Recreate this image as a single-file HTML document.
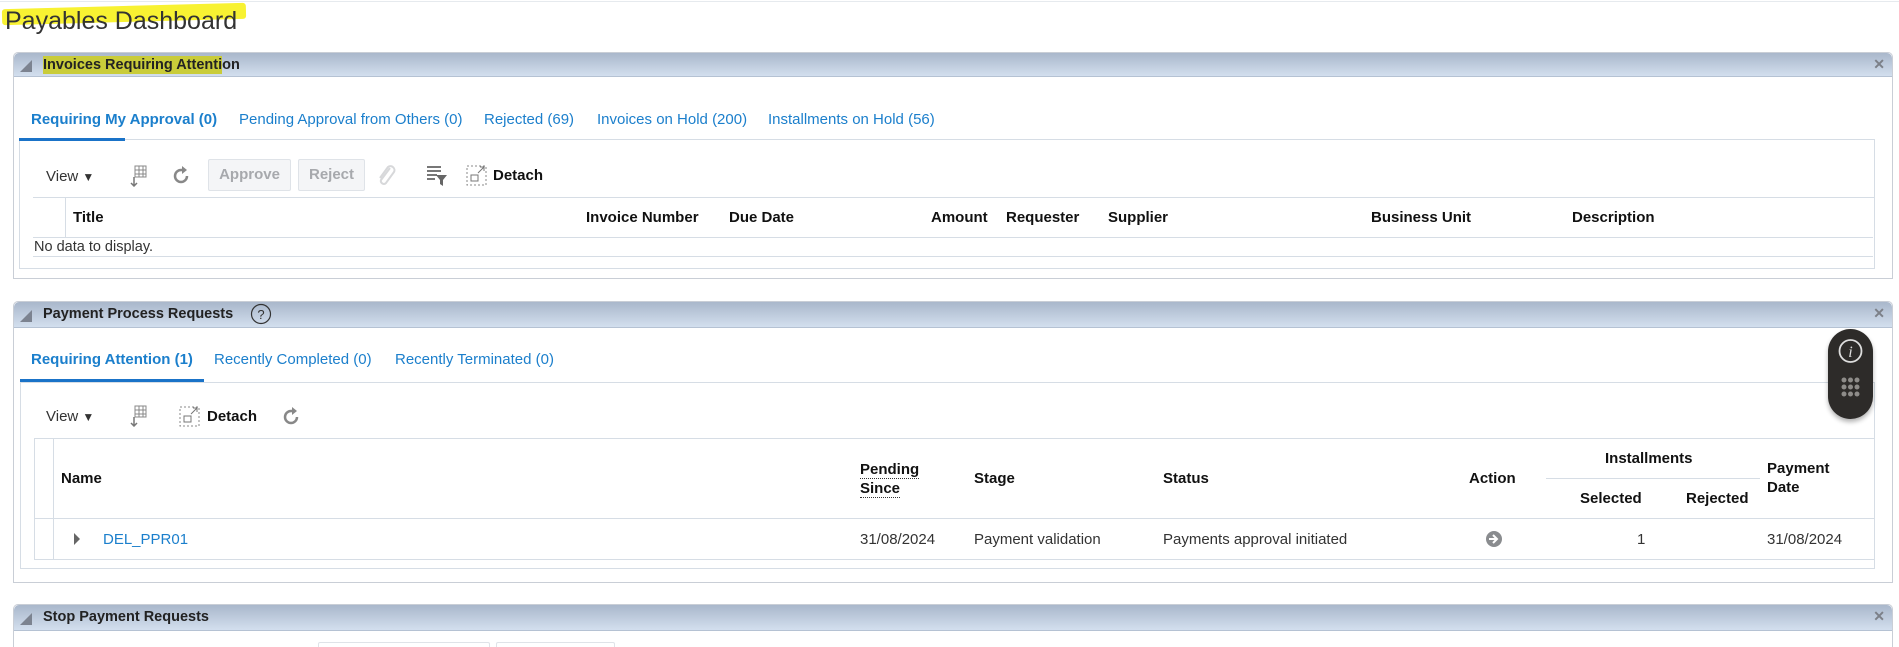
<!DOCTYPE html>
<html style="height:647px;overflow:hidden"><head><meta charset="utf-8"><style>
*{box-sizing:border-box;margin:0;padding:0}
body{width:1899px;height:647px;overflow:hidden;background:#fff;font-family:"Liberation Sans",Arial,sans-serif;font-size:15px;color:#333;position:relative}
.a{position:absolute;white-space:nowrap}
.panel{position:absolute;left:13px;width:1880px;border:1px solid #c9ced6;background:#fff;border-radius:5px 5px 0 0}
.hdr{position:absolute;left:0;right:0;top:0;height:24px;background:linear-gradient(#a9b7cb,#d3dfee);border-radius:5px 5px 0 0;border-bottom:1px solid #b5c2d3}
.hdr b{position:absolute;left:29px;top:4px;font-size:14.5px;color:#222}
.tri{position:absolute;left:6px;top:7px;width:0;height:0;border-left:12px solid transparent;border-bottom:12px solid #7c8390}
.x{position:absolute;right:7px;top:3px;color:#7c8088;font-size:14px;font-weight:bold}
.tab{color:#1b7fcc}
.tabsel{color:#1b7fcc;font-weight:bold}
.b{font-weight:bold;color:#111}
.btn{position:absolute;border:1px solid #dfe3e8;background:#f4f5f7;color:#a7a9ad;font-weight:bold;border-radius:2px;text-align:center}
.ln{position:absolute;height:1px;background:#d6dde5}
.vl{position:absolute;width:1px;background:#d6dde5}
</style></head><body>
<div class="a" style="left:2px;top:6px;width:244px;height:16px;background:#f8f232;border-radius:3px;transform:rotate(-1.5deg)"></div>
<div class="a" style="left:5px;top:7px;font-size:25px;color:#333">Payables Dashboard</div>
<div class="ln" style="left:0;right:0;top:1px;background:#e6eaee"></div>

<!-- Panel 1 -->
<div class="panel" style="top:52px;height:227px">
 <div class="hdr"><div class="tri"></div><b><span style="background:#c9cc3a;padding:1px 0">Invoices Requiring Attenti</span>on</b><div class="x">✕</div></div>
</div>
<div class="a tabsel" style="left:31px;top:111px">Requiring My Approval (0)</div>
<div class="a tab" style="left:239px;top:111px">Pending Approval from Others (0)</div>
<div class="a tab" style="left:484px;top:111px">Rejected (69)</div>
<div class="a tab" style="left:597px;top:111px">Invoices on Hold (200)</div>
<div class="a tab" style="left:768px;top:111px">Installments on Hold (56)</div>
<div class="a" style="left:19px;top:139px;width:1856px;height:130px;border:1px solid #d6dde5"></div>
<div class="a" style="left:19px;top:138px;width:106px;height:3px;background:#1a73c8"></div>
<div class="a" style="left:46px;top:168px">View <span style="font-size:12px">▼</span></div>
<svg class="a" style="left:130px;top:165px" width="18" height="22"><rect x="5" y="1" width="11" height="11" fill="none" stroke="#888"/><path d="M5 5h11M5 9h11M9 1v11M13 1v11" stroke="#888"/><path d="M4 12v8M1 18l3 3 3-3" stroke="#777" fill="none" stroke-width="1.5"/></svg>
<svg class="a" style="left:172px;top:166px" width="20" height="20"><path d="M15 10a6 6 0 1 1-6-6h3" stroke="#888" stroke-width="2.5" fill="none"/><path d="M10 0l5 4-5 4z" fill="#888"/></svg>
<div class="btn" style="left:208px;top:159px;width:83px;height:32px;line-height:30px">Approve</div>
<div class="btn" style="left:298px;top:159px;width:67px;height:32px;line-height:30px">Reject</div>
<svg class="a" style="left:374px;top:164px" width="22" height="24"><path d="M16 4l-9 12a3 3 0 0 0 5 3l8-11a4 4 0 0 0-6-5l-8 11" stroke="#d7d8da" stroke-width="2" fill="none"/></svg>
<svg class="a" style="left:426px;top:165px" width="22" height="22"><path d="M1 2h14M1 6h14M1 10h10M1 14h8" stroke="#777" stroke-width="2"/><path d="M10 10h11l-4 5v6l-3-2v-4z" fill="#666"/></svg>
<svg class="a" style="left:466px;top:165px" width="22" height="22"><rect x="1" y="1" width="19" height="19" fill="none" stroke="#888" stroke-dasharray="2 2"/><rect x="5" y="10" width="7" height="6" fill="none" stroke="#777"/><path d="M12 8l6-6M14 2h4v4" stroke="#777" fill="none"/></svg>
<div class="a b" style="left:493px;top:167px">Detach</div>
<div class="ln" style="left:33px;width:1842px;top:197px"></div>
<div class="vl" style="left:65px;top:197px;height:40px"></div>
<div class="a b" style="left:73px;top:209px">Title</div>
<div class="a b" style="left:586px;top:209px">Invoice Number</div>
<div class="a b" style="left:729px;top:209px">Due Date</div>
<div class="a b" style="left:931px;top:209px">Amount</div>
<div class="a b" style="left:1006px;top:209px">Requester</div>
<div class="a b" style="left:1108px;top:209px">Supplier</div>
<div class="a b" style="left:1371px;top:209px">Business Unit</div>
<div class="a b" style="left:1572px;top:209px">Description</div>
<div class="ln" style="left:33px;width:1840px;top:237px"></div>
<div class="a" style="left:34px;top:239px;color:#333;font-size:14.5px">No data to display.</div>
<div class="ln" style="left:33px;width:1840px;top:256px"></div>

<!-- Panel 2 -->
<div class="panel" style="top:301px;height:282px">
 <div class="hdr" style="height:26px"><div class="tri" style="top:8px"></div><b>Payment Process Requests</b><div class="x">✕</div></div>
</div>
<svg class="a" style="left:250px;top:303px" width="22" height="22"><circle cx="11" cy="11" r="9.5" fill="none" stroke="#333" stroke-width="1.2"/><text x="11" y="16" font-size="13" text-anchor="middle" fill="#333" font-family="Liberation Sans">?</text></svg>
<div class="a tabsel" style="left:31px;top:351px">Requiring Attention (1)</div>
<div class="a tab" style="left:214px;top:351px">Recently Completed (0)</div>
<div class="a tab" style="left:395px;top:351px">Recently Terminated (0)</div>
<div class="a" style="left:20px;top:382px;width:1855px;height:187px;border:1px solid #d6dde5"></div>
<div class="a" style="left:20px;top:379px;width:184px;height:3px;background:#1a73c8"></div>
<div class="a" style="left:46px;top:408px">View <span style="font-size:12px">▼</span></div>
<svg class="a" style="left:130px;top:405px" width="18" height="22"><rect x="5" y="1" width="11" height="11" fill="none" stroke="#888"/><path d="M5 5h11M5 9h11M9 1v11M13 1v11" stroke="#888"/><path d="M4 12v8M1 18l3 3 3-3" stroke="#777" fill="none" stroke-width="1.5"/></svg>
<svg class="a" style="left:179px;top:406px" width="22" height="22"><rect x="1" y="1" width="19" height="19" fill="none" stroke="#888" stroke-dasharray="2 2"/><rect x="5" y="10" width="7" height="6" fill="none" stroke="#777"/><path d="M12 8l6-6M14 2h4v4" stroke="#777" fill="none"/></svg>
<div class="a b" style="left:207px;top:408px">Detach</div>
<svg class="a" style="left:282px;top:407px" width="20" height="20"><path d="M15 10a6 6 0 1 1-6-6h3" stroke="#888" stroke-width="2.5" fill="none"/><path d="M10 0l5 4-5 4z" fill="#888"/></svg>
<div class="a" style="left:34px;top:438px;width:1841px;height:122px;border:1px solid #d6dde5"></div>
<div class="vl" style="left:53px;top:438px;height:122px"></div>
<div class="a b" style="left:61px;top:470px">Name</div>
<div class="a b" style="left:860px;top:461px;border-bottom:1px dotted #333;line-height:17px">Pending</div>
<div class="a b" style="left:860px;top:480px;border-bottom:1px dotted #333;line-height:17px">Since</div>
<div class="a b" style="left:974px;top:470px">Stage</div>
<div class="a b" style="left:1163px;top:470px">Status</div>
<div class="a b" style="left:1469px;top:470px">Action</div>
<div class="a b" style="left:1605px;top:450px">Installments</div>
<div class="ln" style="left:1546px;width:214px;top:478px"></div>
<div class="a b" style="left:1580px;top:490px">Selected</div>
<div class="a b" style="left:1686px;top:490px">Rejected</div>
<div class="a b" style="left:1767px;top:460px">Payment</div>
<div class="a b" style="left:1767px;top:479px">Date</div>
<div class="ln" style="left:34px;width:1840px;top:518px"></div>
<div class="a" style="left:74px;top:533px;width:0;height:0;border-top:6px solid transparent;border-bottom:6px solid transparent;border-left:6px solid #666"></div>
<div class="a tab" style="left:103px;top:531px">DEL_PPR01</div>
<div class="a" style="left:860px;top:531px">31/08/2024</div>
<div class="a" style="left:974px;top:531px">Payment validation</div>
<div class="a" style="left:1163px;top:531px">Payments approval initiated</div>
<svg class="a" style="left:1485px;top:530px" width="18" height="18"><circle cx="9" cy="9" r="8" fill="#8a8c8f"/><path d="M4 9h7M8 5l4 4-4 4" stroke="#fff" stroke-width="2" fill="none"/></svg>
<div class="a" style="left:1637px;top:531px">1</div>
<div class="a" style="left:1767px;top:531px">31/08/2024</div>

<!-- floating widget -->
<div class="a" style="left:1828px;top:329px;width:45px;height:90px;border-radius:23px;background:#2d2b29;box-shadow:0 3px 5px rgba(0,0,0,.3)"></div>
<svg class="a" style="left:1833px;top:334px" width="36" height="80"><circle cx="17.5" cy="17" r="11" fill="none" stroke="#ddd" stroke-width="1.8"/><text x="17.5" y="23" font-size="16" font-style="italic" font-family="Liberation Serif" text-anchor="middle" fill="#ddd">i</text>
<g fill="#8e8c89"><circle cx="11" cy="46" r="2.5"/><circle cx="17.5" cy="46" r="2.5"/><circle cx="24" cy="46" r="2.5"/><circle cx="11" cy="53" r="2.5"/><circle cx="17.5" cy="53" r="2.5"/><circle cx="24" cy="53" r="2.5"/><circle cx="11" cy="60" r="2.5"/><circle cx="17.5" cy="60" r="2.5"/><circle cx="24" cy="60" r="2.5"/></g></svg>

<!-- Panel 3 -->
<div class="panel" style="top:604px;height:43px;border-bottom:none">
 <div class="hdr" style="height:26px"><div class="tri" style="top:8px"></div><b>Stop Payment Requests</b><div class="x">✕</div></div>
</div>
<div class="a" style="left:318px;top:642px;width:172px;height:5px;border:1px solid #dfe3e8;border-bottom:none;border-radius:2px 2px 0 0"></div>
<div class="a" style="left:496px;top:642px;width:119px;height:5px;border:1px solid #dfe3e8;border-bottom:none;border-radius:2px 2px 0 0"></div>
</body></html>
